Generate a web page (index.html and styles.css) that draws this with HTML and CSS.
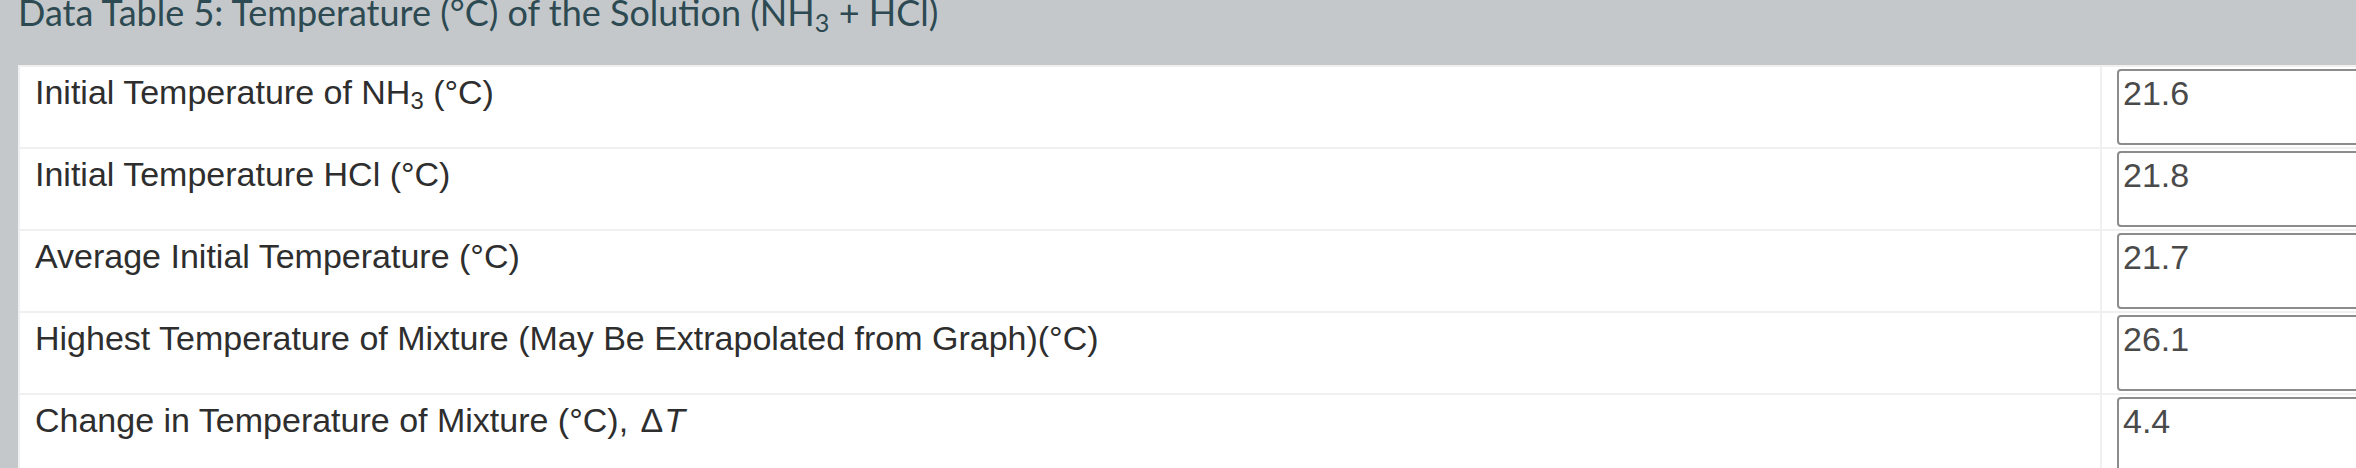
FILE: index.html
```html
<!DOCTYPE html>
<html lang="en">
<head>
<meta charset="utf-8">
<title>Data Table 5</title>
<link rel="stylesheet" href="styles.css">
</head>
<body>
<div class="page">
  <h2 class="title">Data Table 5: Temperature (°C) of the Solution (NH<sub>3</sub> + HCl)</h2>
  <div class="table">
    <div class="row">
      <div class="label">Initial Temperature of NH<sub>3</sub> (°C)</div>
      <div class="value"><div class="field">21.6</div></div>
    </div>
    <div class="row">
      <div class="label">Initial Temperature HCl (°C)</div>
      <div class="value"><div class="field">21.8</div></div>
    </div>
    <div class="row">
      <div class="label">Average Initial Temperature (°C)</div>
      <div class="value"><div class="field">21.7</div></div>
    </div>
    <div class="row">
      <div class="label">Highest Temperature of Mixture (May Be Extrapolated from Graph)(°C)</div>
      <div class="value"><div class="field">26.1</div></div>
    </div>
    <div class="row">
      <div class="label">Change in Temperature of Mixture (°C), <span class="math">Δ<i class="var">T</i></span></div>
      <div class="value"><div class="field">4.4</div></div>
    </div>
  </div>
</div>
</body>
</html>
```

FILE: styles.css
```css
html, body {
  margin: 0;
  padding: 0;
  overflow: hidden;
  background: #c4c8cb;
}

.page {
  padding: 0 0 0 18px;
}

.title {
  margin: -10px 0 31px 0;
  font-family: Lato, "Open Sans", sans-serif;
  font-weight: 400;
  font-size: 36px;
  line-height: normal;
  color: #2d4a52;
}

.title sub {
  font-size: 0.7em;
  line-height: 0;
  vertical-align: -0.22em;
}

.table {
  width: 2600px;
  background: #ffffff;
  border-top: 2px solid #f0f0f0;
  border-left: 2px solid #f0f0f0;
}

.row {
  display: grid;
  grid-template-columns: 2080px 1fr;
  border-bottom: 2px solid #f0f0f0;
}

.label {
  height: 80px;
  box-sizing: border-box;
  padding: 6px 15px;
  font-family: "Liberation Sans", Arial, sans-serif;
  font-size: 34px;
  color: #2e2e2e;
}

.label sub {
  font-size: 0.7em;
  line-height: 0;
  vertical-align: -0.2em;
}

.math {
  margin-left: 3px;
}

.var {
  margin-left: 1px;
  font-style: italic;
}

.value {
  border-left: 2px solid #f0f0f0;
  padding: 2px 15px;
}

.field {
  width: 400px;
  height: 76px;
  box-sizing: border-box;
  border: 2px solid #8c8c8c;
  border-radius: 4px;
  padding: 3px 4px;
  font-family: "Liberation Sans", Arial, sans-serif;
  font-size: 34px;
  color: #4a4a4a;
  background: #ffffff;
}
```
